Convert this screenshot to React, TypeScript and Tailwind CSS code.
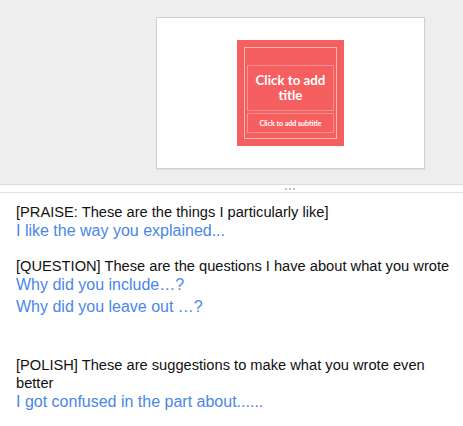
export default function App() {
  return (
    <div className="h-[426px] w-[463px] overflow-hidden bg-white font-['Liberation_Sans',Arial,sans-serif]">
      <div className="h-[185px] border-b border-[#dcdcdc] bg-[#eeeeee] pl-[156px] pt-[17px]">
        <div className="flex h-[152px] w-[269px] items-center justify-center border border-[#cfcfcf] bg-white shadow-[0_1px_1px_rgba(0,0,0,0.05)]">
          <div className="flex h-[106px] w-[107px] bg-[#f65f60] p-[7px]">
            <div className="flex flex-1 flex-col border border-[#fab4b4] px-[2px] pb-[5px] pt-[17px]">
              <div className="flex h-[47px] flex-col items-center justify-center border border-[#f99090] font-['Lato',sans-serif] text-[13.3px] font-bold leading-[15px] text-white">
                <span>Click to add</span>
                <span>title</span>
              </div>
              <div className="mt-[2px] flex h-[21px] items-center justify-center border border-[#f99090] font-['Lato',sans-serif] text-[7px] font-bold text-white">
                Click to add subtitle
              </div>
            </div>
          </div>
        </div>
      </div>
      <div className="flex h-[8px] items-center justify-start border-b border-[#e0e0e0] pl-[285px]">
        <div className="flex gap-[2px]">
          <span className="h-[2px] w-[2px] bg-[#c4c4c4]" />
          <span className="h-[2px] w-[2px] bg-[#c4c4c4]" />
          <span className="h-[2px] w-[2px] bg-[#c4c4c4]" />
        </div>
      </div>
      <div className="pl-[16px] pr-[8px] pt-[10px]">
        <p className="text-[14.67px] leading-[18px] text-[#111]">[PRAISE: These are the things I particularly like]</p>
        <p className="text-[16px] leading-[20px] text-[#4a86e8]">I like the way you explained...</p>
        <p className="mt-[16px] text-[14.67px] leading-[18px] text-[#111]">
          [QUESTION] These are the questions I have about what you wrote
        </p>
        <p className="text-[16px] leading-[20px] text-[#4a86e8]">Why did you include…?</p>
        <p className="mt-[2px] text-[16px] leading-[20px] text-[#4a86e8]">Why did you leave out …?</p>
        <p className="mt-[39px] text-[14.67px] leading-[18px] text-[#111]">
          [POLISH] These are suggestions to make what you wrote even better
        </p>
        <p className="text-[16px] leading-[20px] text-[#4a86e8]">I got confused in the part about......</p>
      </div>
    </div>
  );
}
